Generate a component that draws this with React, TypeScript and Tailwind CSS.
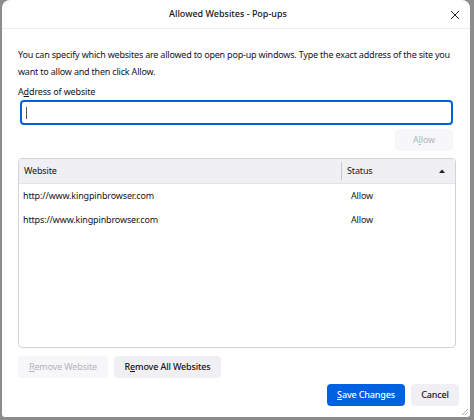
import React from "react";

export default function App() {
  return (
    <div
      className="w-[474px] h-[420px] bg-[#8c8c8c] pl-[2px] pr-[4px] pb-[3px] overflow-hidden"
      style={{ fontFamily: '"Noto Sans", "Open Sans", sans-serif' }}
    >
      <div className="relative h-full w-full bg-white rounded-t-[8px] rounded-b-[3px] flex flex-col text-[#15141a]">
        {/* title bar */}
        <div className="h-[29px] flex items-center justify-center border-b border-[#ececec] relative shrink-0">
          <span className="text-[9px] font-medium ml-[-16px]">Allowed Websites - Pop-ups</span>
          <svg className="absolute right-[10px] top-[10px]" width="10" height="10" viewBox="0 0 10 10">
            <path d="M1 1L9 9M9 1L1 9" stroke="#222" strokeWidth="1" />
          </svg>
        </div>

        <div className="flex flex-col px-[16px] pt-[17px] flex-1 text-[9px] tracking-[-0.15px]">
          <p className="leading-[17px] text-[#15141a] mr-[-12px] tracking-[-0.2px]">
            You can specify which websites are allowed to open pop-up windows. Type the exact address of the site you want to allow and then click Allow.
          </p>
          <label className="mt-[3px] leading-[17px]">
            A<span className="underline">d</span>dress of website
          </label>
          <div className="mt-[0px] ml-[2px] mr-[1px] h-[25px] rounded-[4px] border-2 border-[#0061e0] flex items-center pl-[4px]">
            <div className="w-px h-[12px] bg-[#555]" />
          </div>
          <div className="flex justify-end mt-[4px] mr-[1px]">
            <button className="w-[58px] h-[22px] rounded-[4px] bg-[#f7f7f9] text-[#b4b4b8]">
              A<span className="underline">l</span>low
            </button>
          </div>

          <div className="mt-[7px] h-[190px] border border-[#d4d4d8] rounded-[4px] flex flex-col overflow-hidden mr-[-2px]">
            <div className="h-[25px] bg-[#f0f0f4] flex items-center border-b border-[#e4e4e8] shrink-0">
              <div className="flex-1 pl-[5px]">Website</div>
              <div className="w-px h-[18px] bg-[#c8c8cc]" />
              <div className="w-[113px] pl-[5px] flex items-center justify-between pr-[10px]">
                <span>Status</span>
                <svg width="6" height="4" viewBox="0 0 6 4">
                  <path d="M0 4L3 0.5L6 4Z" fill="#222" />
                </svg>
              </div>
            </div>
            <div className="flex flex-col">
              <div className="h-[24px] flex items-center">
                <div className="flex-1 pl-[4px]">http://www.kingpinbrowser.com</div>
                <div className="w-[114px] pl-[10px]">Allow</div>
              </div>
              <div className="h-[24px] flex items-center">
                <div className="flex-1 pl-[4px]">https://www.kingpinbrowser.com</div>
                <div className="w-[114px] pl-[10px]">Allow</div>
              </div>
            </div>
          </div>

          <div className="flex gap-[6px] mt-[8px]">
            <button className="w-[90px] h-[22px] rounded-[4px] bg-[#f7f7f9] text-[#b4b4b8]">
              <span className="underline">R</span>emove Website
            </button>
            <button className="w-[107px] h-[22px] rounded-[4px] bg-[#f0f0f4] font-medium">
              R<span className="underline">e</span>move All Websites
            </button>
          </div>

          <div className="flex justify-end gap-[6px] mt-[6px] mr-[-5px]">
            <button className="w-[78px] h-[22px] rounded-[4px] bg-[#0061e0] text-white font-medium">
              <span className="underline">S</span>ave Changes
            </button>
            <button className="w-[48px] h-[22px] rounded-[4px] bg-[#f0f0f4] font-medium">
              Cancel
            </button>
          </div>
        </div>

        <svg className="absolute right-[1px] bottom-[1px]" width="9" height="9" viewBox="0 0 9 9">
          <path d="M8 2L2 8M8 5L5 8" stroke="#999" strokeWidth="0.8" />
        </svg>
      </div>
    </div>
  );
}
